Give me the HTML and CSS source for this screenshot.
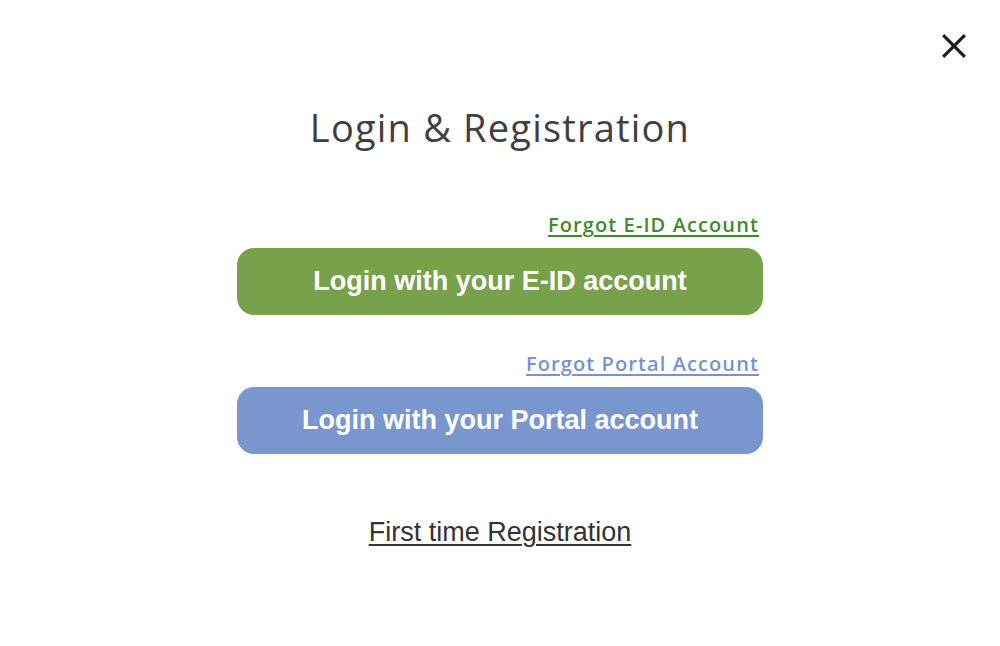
FILE: index.html
```html
<!DOCTYPE html>
<html lang="en">
<head>
<meta charset="utf-8">
<title>Login &amp; Registration</title>
<link rel="stylesheet" href="styles.css">
</head>
<body>
<div class="modal">
  <button class="close" aria-label="Close">
    <svg viewBox="0 0 24 24" width="26" height="26"><path d="M2 2 L22 22 M22 2 L2 22" stroke="#1f1f1f" stroke-width="3" stroke-linecap="butt" fill="none"/></svg>
  </button>
  <div class="content">
    <h1 class="title">Login &amp; Registration</h1>
    <div class="group">
      <a class="forgot forgot-green" href="#">Forgot E-ID Account</a>
      <button class="btn btn-green">Login with your E-ID account</button>
    </div>
    <div class="group">
      <a class="forgot forgot-blue" href="#">Forgot Portal Account</a>
      <button class="btn btn-blue">Login with your Portal account</button>
    </div>
    <a class="register" href="#">First time Registration</a>
  </div>
</div>
</body>
</html>
```
FILE: styles.css
```css
html, body {
  margin: 0;
  padding: 0;
  background: #ffffff;
}
.modal {
  position: relative;
  width: 1000px;
  height: 646px;
}
.close {
  position: absolute;
  top: 33px;
  right: 33px;
  padding: 0;
  border: 0;
  background: none;
  width: 26px;
  height: 26px;
  display: block;
}
.close svg { display: block; }
.content {
  width: 526px;
  margin: 0 auto;
  padding-top: 101px;
  display: flex;
  flex-direction: column;
  align-items: stretch;
}
.title {
  margin: 0;
  text-align: center;
  font-family: "Open Sans", sans-serif;
  font-weight: 400;
  font-size: 38px;
  line-height: 52px;
  color: #404040;
  letter-spacing: 1.2px;
}
.group {
  display: flex;
  flex-direction: column;
  align-items: flex-end;
}
.group:first-of-type { margin-top: 59px; }
.group + .group { margin-top: 36px; }
.forgot {
  font-family: "Open Sans", sans-serif;
  font-weight: 600;
  font-size: 20px;
  line-height: 26px;
  letter-spacing: 1.1px;
  margin-right: 4px;
  margin-bottom: 10px;
  text-decoration: underline;
  text-underline-offset: 3px;
  text-decoration-thickness: 1.5px;
}
.forgot-green { color: #3f8a2c; }
.forgot-blue { color: #7891d2; }
.btn {
  width: 100%;
  height: 67px;
  border: 0;
  border-radius: 17px;
  color: #ffffff;
  font-family: "Liberation Sans", Arial, sans-serif;
  font-weight: 700;
  font-size: 27px;
  padding: 0;
}
.btn-green { background: #77a24b; }
.btn-blue { background: #7a96cf; }
.register {
  align-self: center;
  margin-top: 62px;
  font-family: "Liberation Sans", Arial, sans-serif;
  font-size: 27px;
  line-height: 32px;
  color: #333333;
  text-decoration: underline;
  text-underline-offset: 3px;
  text-decoration-thickness: 1.5px;
}
```
